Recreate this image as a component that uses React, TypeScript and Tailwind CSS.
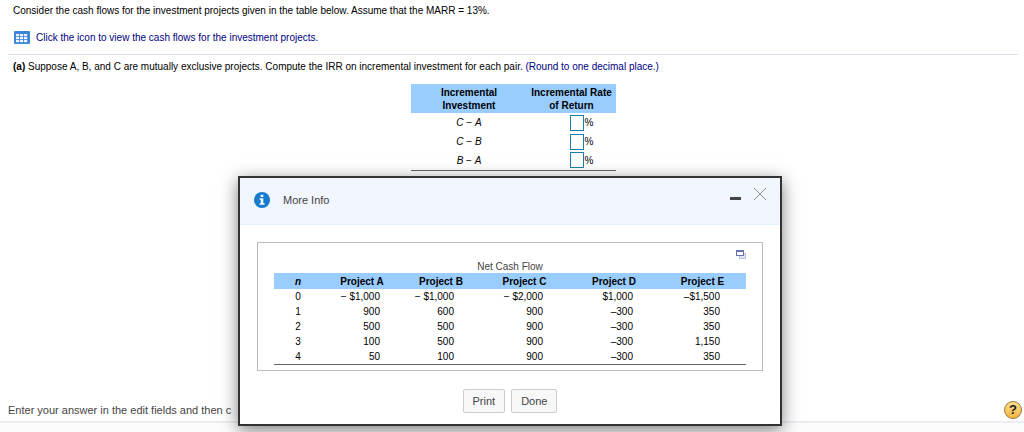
import React from 'react';
import { clsx } from 'clsx';

const pairs = [
  ['C', 'A'],
  ['C', 'B'],
  ['B', 'A'],
];

const columns = [
  { name: 'Project A', pad: 'pr-[22px]' },
  { name: 'Project B', pad: 'pr-[26px]' },
  { name: 'Project C', pad: 'pr-[26px]' },
  { name: 'Project D', pad: 'pr-[26px]' },
  { name: 'Project E', pad: 'pr-[26px]' },
];

const cashFlows = [
  ['− $1,000', '− $1,000', '− $2,000', '$1,000', '–$1,500'],
  ['900', '600', '900', '–300', '350'],
  ['500', '500', '900', '–300', '350'],
  ['100', '500', '900', '–300', '1,150'],
  ['50', '100', '900', '–300', '350'],
];

const TableIcon: React.FC = () => (
  <svg width="17" height="14" viewBox="-1 0 17 14" aria-hidden="true">
    <rect width="16" height="13" rx="1" fill="#3b86d8" />
    {[3, 6, 9].map((y) =>
      [2, 6, 10].map((x) => <rect key={`${x}-${y}`} x={x} y={y} width="3.2" height="2.2" fill="#eef6ff" />)
    )}
  </svg>
);

const InfoIcon: React.FC = () => (
  <svg width="16" height="16" viewBox="0 0 16 16" aria-hidden="true">
    <circle cx="8" cy="8" r="8" fill="#147bd1" />
    <path d="M6.7 2.8h2.6v2.1H6.7zM5.6 6.2h3.7v5h1.2v1.6H5.5v-1.6h1.3V7.8H5.6z" fill="#fff" />
  </svg>
);

const PopOutIcon: React.FC = () => (
  <svg width="10" height="9" viewBox="0 0 10 9" aria-hidden="true">
    <rect x="3.5" y="3.5" width="6" height="5" fill="#e3e5f3" stroke="#b9bedf" />
    <rect x="0.5" y="0.5" width="7" height="5" fill="#fff" stroke="#6670b4" />
    <path d="M0 1h8" stroke="#6670b4" strokeWidth="2" />
  </svg>
);

const IncrementalTable: React.FC = () => (
  <table className="mx-auto mt-2.5 w-[205px] table-fixed border-b border-[#666] text-center">
    <colgroup>
      <col className="w-[117px]" />
      <col />
    </colgroup>
    <thead className="bg-[#99ccff] leading-[13px]">
      <tr className="h-[29px]">
        <th className="whitespace-nowrap p-0">
          Incremental
          <br />
          Investment
        </th>
        <th className="whitespace-nowrap p-0">
          Incremental Rate
          <br />
          of Return
        </th>
      </tr>
    </thead>
    <tbody>
      {pairs.map(([first, second]) => (
        <tr key={first + second} className="h-[19px]">
          <td className="p-0">
            <i>{first}</i> − <i>{second}</i>
          </td>
          <td className="p-0">
            <label className="flex items-center gap-px pl-[42px]">
              <input
                type="text"
                aria-label={`Rate of return for ${first} minus ${second}`}
                className="h-4 w-3.5 border border-[#1a7fa5] bg-white"
              />
              %
            </label>
          </td>
        </tr>
      ))}
    </tbody>
  </table>
);

const CashFlowTable: React.FC = () => (
  <table className="w-full table-fixed border-b border-[#666] text-[10px] leading-[15px] text-black">
    <caption className="leading-[13px] text-[#444]">Net Cash Flow</caption>
    <colgroup>
      <col className="w-[48px]" />
      <col className="w-[80px]" />
      <col className="w-[78px]" />
      <col className="w-[89px]" />
      <col className="w-[90px]" />
      <col />
    </colgroup>
    <thead className="bg-[#99ccff]">
      <tr className="h-4">
        <th className="p-0 italic">n</th>
        {columns.map(({ name }) => (
          <th key={name} className="p-0">
            {name}
          </th>
        ))}
      </tr>
    </thead>
    <tbody>
      {cashFlows.map((row, n) => (
        <tr key={n}>
          <td className="p-0 text-center">{n}</td>
          {row.map((value, i) => (
            <td key={i} className={clsx('whitespace-nowrap text-right', columns[i].pad)}>
              {value}
            </td>
          ))}
        </tr>
      ))}
    </tbody>
  </table>
);

const MoreInfoDialog: React.FC = () => (
  <div
    role="dialog"
    aria-labelledby="more-info"
    className="w-[544px] border-2 border-[#333] bg-white text-[11px] text-[#444] shadow-[0_4px_16px_rgba(0,0,0,0.5)]"
  >
    <div className="flex h-[47px] items-center border-b border-[#e6f1fc] bg-[#f0f5fe] px-3.5 pb-0.5">
      <InfoIcon />
      <h2 id="more-info" className="ml-[13px] flex-1">
        More Info
      </h2>
      <button type="button" aria-label="Minimize" className="mb-1 mr-3">
        <svg width="12" height="3" viewBox="0 0 12 3">
          <rect width="11" height="3" fill="#444" />
        </svg>
      </button>
      <button type="button" aria-label="Close" className="mb-3">
        <svg width="12" height="12" viewBox="0 0 12 12" stroke="#777" strokeWidth="0.8">
          <path d="M0 0l12 12M12 0L0 12" />
        </svg>
      </button>
    </div>

    <div className="mx-[17px] mt-[17px] border border-[#bbb] px-4 pb-[5px]">
      <div className="flex justify-end pb-px pt-1.5">
        <button type="button" aria-label="Open in new window" className="h-[10px]">
          <PopOutIcon />
        </button>
      </div>
      <CashFlowTable />
    </div>

    <div className="flex justify-center gap-1.5 pb-[11px] pt-[18px]">
      <button type="button" className="h-6 rounded-xs border border-[#ccc] bg-[#f8f8f8] px-[9px]">
        Print
      </button>
      <button type="button" className="h-6 rounded-xs border border-[#ccc] bg-[#f8f8f8] px-[9px]">
        Done
      </button>
    </div>
  </div>
);

const App: React.FC = () => {
  return (
    <div className="relative flex min-h-screen flex-col overflow-hidden bg-white font-['Liberation_Sans',Arial,sans-serif] text-[10px] text-black">
      <main className="flex-1 pl-2 pr-1.5">
        <div className="px-[5px] pt-1">
          <p className="leading-[14px]">
            Consider the cash flows for the investment projects given in the table below. Assume that the MARR = 13%.
          </p>
          <a href="#more-info" className="mt-3 flex items-center gap-1.5 leading-4 text-[#00007f]">
            <TableIcon />
            Click the icon to view the cash flows for the investment projects.
          </a>
        </div>
        <hr className="mt-2 border-[#e0e0ec]" />
        <p className="mt-[5px] px-[5px] leading-[14px]">
          <b>(a)</b> Suppose A, B, and C are mutually exclusive projects. Compute the IRR on incremental investment for
          each pair. <span className="text-[#00007f]">(Round to one decimal place.)</span>
        </p>
        <IncrementalTable />
      </main>

      <footer className="text-[11px]">
        <div className="flex items-center justify-between pb-0.5 pl-2 pr-0.5">
          <p className="text-[#444]">Enter your answer in the edit fields and then c</p>
          <button
            type="button"
            aria-label="Help"
            className="size-[18px] rounded-full border border-[#9a7a3a] bg-linear-to-b from-[#ffe08a] to-[#f3b33c] text-[13px] font-bold leading-4 text-[#222]"
          >
            ?
          </button>
        </div>
        <div className="h-[11px] border-t-2 border-[#ededf4] bg-[#fcfcfd]" />
      </footer>

      <div className="absolute inset-x-0 top-44 flex justify-center pr-1">
        <MoreInfoDialog />
      </div>
    </div>
  );
};

export default App;
